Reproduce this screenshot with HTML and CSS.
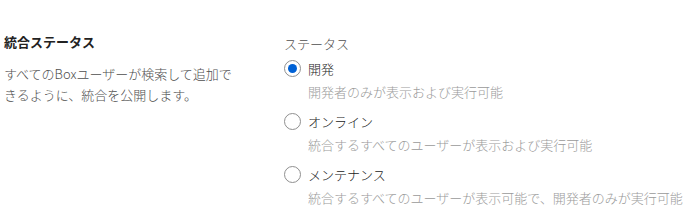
FILE: index.html
```html
<!DOCTYPE html>
<html lang="ja">

<head>
    <meta charset="UTF-8">
    <title>統合ステータス</title>
    <link rel="stylesheet" href="styles.css">
</head>

<body>
    <div class="setting-row">
        <div class="setting-info">
            <h4>統合ステータス</h4>
            <p>すべてのBoxユーザーが検索して追加できるように、統合を公開します。</p>
        </div>

        <fieldset class="status-options">
            <legend>ステータス</legend>

            <label class="radio-item">
                <input type="radio" name="status" value="dev" checked>
                <span class="radio-mark"></span>
                <span class="radio-text">開発</span>
            </label>
            <div class="radio-desc">開発者のみが表示および実行可能</div>

            <label class="radio-item">
                <input type="radio" name="status" value="online">
                <span class="radio-mark"></span>
                <span class="radio-text">オンライン</span>
            </label>
            <div class="radio-desc">統合するすべてのユーザーが表示および実行可能</div>

            <label class="radio-item">
                <input type="radio" name="status" value="maintenance">
                <span class="radio-mark"></span>
                <span class="radio-text">メンテナンス</span>
            </label>
            <div class="radio-desc">統合するすべてのユーザーが表示可能で、開発者のみが実行可能</div>
        </fieldset>
    </div>
</body>

</html>
```

FILE: styles.css
```css
body {
    margin: 0;
    font-family: "Noto Sans CJK JP", "Noto Sans", sans-serif;
    font-size: 13px;
    font-weight: 300;
    color: #222222;
    background-color: #ffffff;
}

.setting-row {
    display: flex;
    padding: 32px 0 0 4px;
}

.setting-info {
    width: 240px;
    margin-right: 40px;
}

.setting-info h4 {
    margin: 0 0 11px;
    font-size: 13px;
    line-height: 20px;
    font-weight: bold;
}

.setting-info p {
    margin: 0;
    line-height: 21px;
    color: #4e4e4e;
}

.status-options {
    border: none;
    margin: 0;
    padding: 0;
}

.status-options legend {
    padding: 0;
    line-height: 24px;
    color: #4e4e4e;
}

.radio-item {
    display: flex;
    align-items: center;
    height: 24px;
    cursor: pointer;
}

.radio-item input {
    display: none;
}

.radio-mark {
    flex-shrink: 0;
    width: 15px;
    height: 15px;
    border: 1px solid #8f8f8f;
    border-radius: 50%;
    margin-right: 7px;
    display: flex;
    align-items: center;
    justify-content: center;
}

.radio-item input:checked + .radio-mark::after {
    content: "";
    width: 9px;
    height: 9px;
    border-radius: 50%;
    background-color: #0061d5;
}

.radio-desc {
    margin: 0 0 6px 24px;
    line-height: 23px;
    color: #9a9a9a;
}
```
